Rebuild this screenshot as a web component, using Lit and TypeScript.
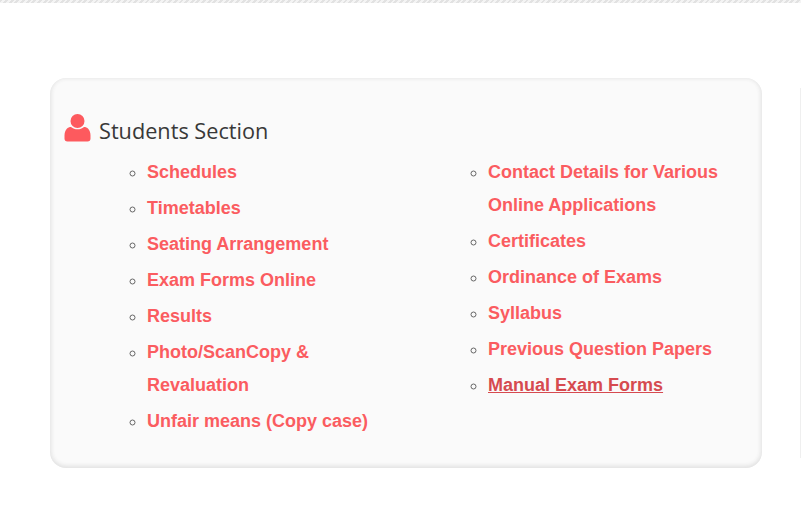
import { LitElement, html, css } from 'lit';
import { customElement } from 'lit/decorators.js';

const leftLinks = [
	'Schedules',
	'Timetables',
	'Seating Arrangement',
	'Exam Forms Online',
	'Results',
	'Photo/ScanCopy & Revaluation',
	'Unfair means (Copy case)'
];

const rightLinks = [
	'Contact Details for Various Online Applications',
	'Certificates',
	'Ordinance of Exams',
	'Syllabus',
	'Previous Question Papers',
	'Manual Exam Forms'
];

@customElement('app-root')
export class AppRoot extends LitElement {
	static styles = [
		css`
			:host {
				display: block;
				height: 513px;
				overflow: hidden;
				background: #fff;
				font-family: 'Liberation Sans', Arial, sans-serif;
			}

			.strip {
				height: 3px;
				background: repeating-linear-gradient(135deg, #e2e2e2 0 2px, #f4f4f4 2px 4px);
			}

			.row {
				display: flex;
				align-items: center;
				gap: 38px;
				padding: 75px 0 0 50px;
				width: 1000px;
			}

			.card {
				box-sizing: border-box;
				width: 712px;
				height: 390px;
				flex: none;
				border-radius: 16px;
				background: #fafafa;
				box-shadow: inset 0 -1px 4px 1px #e0e0e0;
				padding: 34px 0 0 14px;
			}

			.next {
				box-sizing: border-box;
				width: 100px;
				height: 370px;
				flex: none;
				border-left: 2px solid #efefef;
			}

			h2 {
				display: flex;
				align-items: flex-end;
				gap: 8px;
				margin: 0;
				height: 30px;
				font-family: 'Open Sans', sans-serif;
				font-size: 21.7px;
				font-weight: 400;
				line-height: 27px;
				color: #383838;
			}

			h2 svg {
				display: block;
				flex: none;
			}

			h2 span {
				margin-bottom: -2px;
			}

			.columns {
				display: grid;
				grid-template-columns: 341px 1fr;
				margin-top: 14px;
				padding-left: 83px;
			}

			ul {
				margin: 0;
				padding: 0;
				list-style: circle;
				font-size: 18px;
				font-weight: 700;
				line-height: 33px;
				color: #666;
			}

			li {
				margin-bottom: 3px;
				max-width: 240px;
			}

			a {
				color: #fa5c60;
				text-decoration: none;
			}

			a.active {
				color: #d64a50;
				text-decoration: underline;
			}
		`
	];

	private renderList(links: string[]) {
		return html`<ul>
			${links.map(
				(link) =>
					html`<li><a class=${link === 'Manual Exam Forms' ? 'active' : ''} href="#">${link}</a></li>`
			)}
		</ul>`;
	}

	render() {
		return html`
			<div class="strip"></div>
			<div class="row">
				<section class="card">
					<h2>
						<svg width="27" height="29" viewBox="0 0 27 29" fill="#fd5a5e">
							<circle cx="13.5" cy="8" r="7" />
							<path d="M.5 22.500c0-6 3.500-8.500 6.500-8.500 2 1.600 4 2.300 6.500 2.300s4.500-.7 6.500-2.300c3 0 6.500 2.500 6.500 8.500v3a3 3 0 0 1-3 3H3.500a3 3 0 0 1-3-3z" />
						</svg>
						<span>Students Section</span>
					</h2>
					<div class="columns">
						${this.renderList(leftLinks)} ${this.renderList(rightLinks)}
					</div>
				</section>
				<div class="next"></div>
			</div>
		`;
	}
}
